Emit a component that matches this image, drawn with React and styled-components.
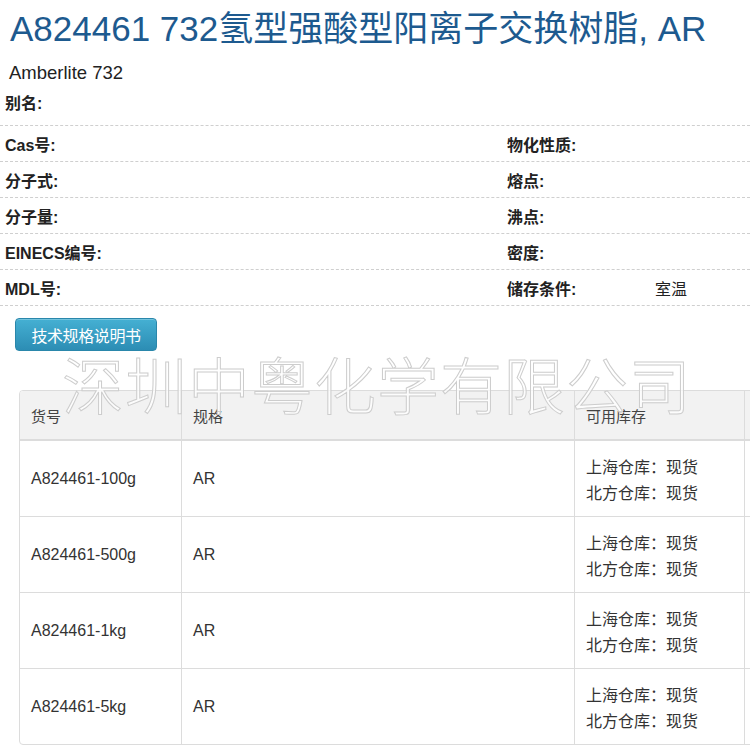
import React from "react";
import styled, { createGlobalStyle } from "styled-components";

const GlobalStyle = createGlobalStyle`
  html, body {
    margin: 0;
    padding: 0;
    background: #fff;
    overflow: hidden;
  }
  body {
    font-family: "Liberation Sans", "Noto Sans CJK SC", Arial, sans-serif;
    color: #333;
  }
`;

const Page = styled.div`
  width: 750px;
  overflow: hidden;
`;

const Title = styled.h1`
  margin: 0;
  padding: 9px 0 0 10px;
  font-size: 35px;
  line-height: 40px;
  font-weight: normal;
  color: #1d5a8f;
  white-space: nowrap;
`;

const SubTitle = styled.div`
  padding: 13px 0 0 9px;
  font-size: 18.5px;
  line-height: 22px;
  color: #222;
`;

const InfoList = styled.div`
  margin-top: 2px;
`;

const InfoRow = styled.div`
  display: grid;
  grid-template-columns: 502px 148px 1fr;
  align-items: center;
  height: ${(p) => (p.$first ? "39px" : "35px")};
  border-bottom: 1px dashed #cfcfcf;
  font-size: 16px;
  padding-left: 5px;
`;

const Label = styled.span`
  font-weight: bold;
  color: #222;
  ${(p) => p.$top && "align-self: start; padding-top: 4px;"}
`;

const Value = styled.span`
  color: #222;
`;

const Section = styled.div`
  position: relative;
  padding: 12px 0 0 15px;
`;

const SpecButton = styled.button`
  display: block;
  width: 142px;
  height: 33px;
  border: 1px solid #2a87ab;
  border-radius: 4px;
  background: linear-gradient(to bottom, #45b0d3, #2c8db4);
  color: #fff;
  font-family: "Noto Sans CJK SC", sans-serif;
  font-size: 16px;
  letter-spacing: -0.4px;
  box-shadow: inset 0 1px 0 rgba(255, 255, 255, 0.25);
  cursor: pointer;
  padding: 0;
`;

const Watermark = styled.div`
  position: absolute;
  left: 62px;
  top: 37px;
  font-family: "Noto Sans CJK SC", sans-serif;
  font-weight: 300;
  font-size: 62px;
  line-height: 80px;
  white-space: nowrap;
  letter-spacing: 1px;
  color: rgba(255, 255, 255, 0.75);
  -webkit-text-stroke: 1px #cdcdcd;
  pointer-events: none;
  z-index: 2;
`;

const TableWrap = styled.div`
  margin: 39px 0 0 4px;
  width: 800px;
  border: 1px solid #dcdcdc;
  border-radius: 4px;
  overflow: hidden;
`;

const Table = styled.table`
  width: 100%;
  border-collapse: collapse;
  font-size: 16px;
  color: #333;
`;

const Th = styled.th`
  background: #f2f2f2;
  height: 48px;
  padding: 0 0 0 11px;
  text-align: left;
  font-weight: normal;
  font-family: "Noto Sans CJK SC", sans-serif;
  font-size: 15px;
  color: #444;
  border-right: 1px solid #dcdcdc;
  border-bottom: 2px solid #dcdcdc;
  width: ${(p) => p.$w || "auto"};
  &:last-child {
    border-right: none;
  }
`;

const Td = styled.td`
  height: 75px;
  padding: 0 0 0 11px;
  border-right: 1px solid #dcdcdc;
  border-top: 1px solid #dcdcdc;
  vertical-align: middle;
  &:last-child {
    border-right: none;
  }
`;

const Stock = styled.div`
  font-family: "Noto Sans CJK SC", sans-serif;
  font-size: 16px;
  line-height: 26px;
  color: #333;
`;

const leftInfo = ["别名:", "Cas号:", "分子式:", "分子量:", "EINECS编号:", "MDL号:"];
const rightInfo = [null, ["物化性质:", ""], ["熔点:", ""], ["沸点:", ""], ["密度:", ""], ["储存条件:", "室温"]];

const rows = ["A824461-100g", "A824461-500g", "A824461-1kg", "A824461-5kg"];

export default function App() {
  return (
    <Page>
      <GlobalStyle />
      <Title>A824461 732氢型强酸型阳离子交换树脂, AR</Title>
      <SubTitle>Amberlite 732</SubTitle>
      <InfoList>
        {leftInfo.map((l, i) => (
          <InfoRow key={l} $first={i === 0}>
            <Label $top={i === 0}>{l}</Label>
            <Label>{rightInfo[i] ? rightInfo[i][0] : ""}</Label>
            <Value>{rightInfo[i] ? rightInfo[i][1] : ""}</Value>
          </InfoRow>
        ))}
      </InfoList>
      <Section>
        <SpecButton>技术规格说明书</SpecButton>
        <Watermark>深圳中粤化学有限公司</Watermark>
        <TableWrap>
          <Table>
            <thead>
              <tr>
                <Th $w="150px">货号</Th>
                <Th $w="381px">规格</Th>
                <Th $w="158px">可用库存</Th>
                <Th></Th>
              </tr>
            </thead>
            <tbody>
              {rows.map((r) => (
                <tr key={r}>
                  <Td>{r}</Td>
                  <Td>AR</Td>
                  <Td>
                    <Stock>上海仓库：现货</Stock>
                    <Stock>北方仓库：现货</Stock>
                  </Td>
                  <Td></Td>
                </tr>
              ))}
            </tbody>
          </Table>
        </TableWrap>
      </Section>
    </Page>
  );
}
